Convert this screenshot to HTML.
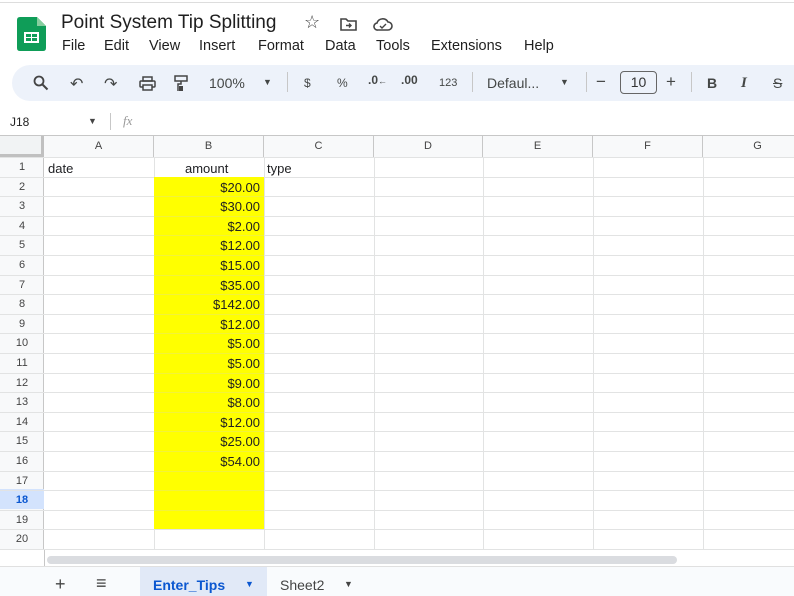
<!DOCTYPE html>
<html><head><style>
*{margin:0;padding:0;box-sizing:border-box}
body{width:794px;height:596px;overflow:hidden;background:#fff;font-family:"Liberation Sans",Arial,sans-serif;position:relative;color:#202124}
.a{position:absolute}
.m{position:absolute;top:38px;font-size:14.5px;color:#1f1f1f}
.tb{position:absolute;top:74px;font-size:14px;color:#444746}
.gl{position:absolute;background:#e2e3e3}
.rh{position:absolute;left:0;width:44px;text-align:center;font-size:11px;color:#444}
.ch{position:absolute;top:136px;height:21px;line-height:21px;text-align:center;font-size:11px;color:#444;border-right:1px solid #c7c7c7}
.amt{position:absolute;left:154px;width:106px;text-align:right;font-size:13px;color:#222;z-index:3}
</style></head><body>
<div class="a" style="left:0;top:2px;width:794px;height:1px;background:#ddd"></div>
<svg class="a" style="left:17px;top:17px" width="30" height="34" viewBox="0 0 30 34"><path d="M3 0H20L29 9V31Q29 34 26 34H3Q0 34 0 31V3Q0 0 3 0Z" fill="#0f9d58"/><path d="M20 0V9H29Z" fill="#87ce9f"/><rect x="7" y="15" width="15" height="11" fill="#fff"/><rect x="9" y="17" width="5" height="3" fill="#0f9d58"/><rect x="15" y="17" width="5" height="3" fill="#0f9d58"/><rect x="9" y="21" width="5" height="3" fill="#0f9d58"/><rect x="15" y="21" width="5" height="3" fill="#0f9d58"/></svg>
<div class="a" style="left:61px;top:12px;font-size:19px;color:#1f1f1f">Point System Tip Splitting</div>
<div class="a" style="left:304px;top:12px;font-size:18px;color:#444">☆</div>
<svg class="a" style="left:340px;top:17px" width="17" height="14"><path d="M1 2H6L8 4H16V13H1Z" fill="none" stroke="#444" stroke-width="1.6"/><path d="M6 8.5H11M9 6.5L11 8.5L9 10.5" stroke="#444" fill="none" stroke-width="1.4"/></svg>
<svg class="a" style="left:373px;top:17px" width="20" height="14"><path d="M5 13H15A4 4 0 0 0 15 5A6 6 0 0 0 4 6A3.5 3.5 0 0 0 5 13Z" fill="none" stroke="#444" stroke-width="1.6"/><path d="M7 9L9 11L13 7" stroke="#444" fill="none" stroke-width="1.4"/></svg>
<div class="m" style="left:62px">File</div><div class="m" style="left:104px">Edit</div><div class="m" style="left:149px">View</div><div class="m" style="left:199px">Insert</div><div class="m" style="left:258px">Format</div><div class="m" style="left:325px">Data</div><div class="m" style="left:376px">Tools</div><div class="m" style="left:431px">Extensions</div><div class="m" style="left:524px">Help</div>
<div class="a" style="left:12px;top:65px;width:800px;height:36px;border-radius:18px;background:#edf2fa"></div>
<svg class="a" style="left:33px;top:75px" width="16" height="16"><circle cx="6" cy="6" r="4.5" fill="none" stroke="#444" stroke-width="1.8"/><path d="M9.5 9.5L14.5 14.5" stroke="#444" stroke-width="2"/></svg>
<div class="tb" style="left:70px;font-size:16px">↶</div>
<div class="tb" style="left:104px;font-size:16px">↷</div>
<svg class="a" style="left:139px;top:76px" width="17" height="15"><rect x="4" y="1" width="9" height="4" fill="none" stroke="#444" stroke-width="1.5"/><rect x="1" y="5" width="15" height="6" rx="1" fill="none" stroke="#444" stroke-width="1.5"/><rect x="4" y="9" width="9" height="5" fill="#edf2fa" stroke="#444" stroke-width="1.5"/></svg>
<svg class="a" style="left:174px;top:75px" width="14" height="17"><rect x="1" y="1" width="12" height="5" fill="none" stroke="#444" stroke-width="1.5"/><path d="M7 6V9H4V16" fill="none" stroke="#444" stroke-width="1.5"/><rect x="5" y="11" width="4" height="5" fill="#444"/></svg>
<div class="tb" style="left:209px;top:75px;font-size:14px">100%</div>
<div class="tb" style="left:263px;top:77px;font-size:9px">▼</div>
<div class="a" style="left:287px;top:72px;width:1px;height:20px;background:#c7c7c7"></div>
<div class="tb" style="left:304px;top:76px;font-size:12px">$</div>
<div class="tb" style="left:337px;top:76px;font-size:12px">%</div>
<div class="tb" style="left:368px;top:73px;font-size:12px;font-weight:bold">.0<span style="font-size:9px">←</span></div>
<div class="tb" style="left:401px;top:73px;font-size:12px;font-weight:bold">.00</div>
<div class="tb" style="left:439px;top:77px;font-size:11px">123</div>
<div class="a" style="left:472px;top:72px;width:1px;height:20px;background:#c7c7c7"></div>
<div class="tb" style="left:487px;top:75px;font-size:14px">Defaul...</div>
<div class="tb" style="left:560px;top:77px;font-size:9px">▼</div>
<div class="a" style="left:586px;top:72px;width:1px;height:20px;background:#c7c7c7"></div>
<div class="tb" style="left:596px;top:72px;font-size:17px">−</div>
<div class="a" style="left:620px;top:71px;width:37px;height:23px;border:1px solid #666;border-radius:4px;font-size:14px;text-align:center;line-height:21px;color:#333">10</div>
<div class="tb" style="left:666px;top:72px;font-size:17px">+</div>
<div class="a" style="left:691px;top:72px;width:1px;height:20px;background:#c7c7c7"></div>
<div class="tb" style="left:707px;top:75px;font-weight:bold">B</div>
<div class="tb" style="left:741px;top:75px;font-style:italic;font-family:'Liberation Serif',serif;font-weight:bold;font-size:15px">I</div>
<div class="tb" style="left:773px;top:75px;text-decoration:line-through">S</div>
<div class="a" style="left:10px;top:115px;font-size:12px;color:#222">J18</div>
<div class="a" style="left:88px;top:116px;font-size:9px;color:#444">▼</div>
<div class="a" style="left:110px;top:113px;width:1px;height:17px;background:#c7c7c7"></div>
<div class="a" style="left:123px;top:113px;font-size:13px;font-style:italic;font-family:'Liberation Serif',serif;color:#999">fx</div>
<div class="a" style="left:0;top:135px;width:794px;height:1px;background:#c7c7c7"></div>
<div class="a" style="left:0;top:136px;width:794px;height:21px;background:#f8f9fa"></div>
<div class="a" style="left:0;top:136px;width:44px;height:21px;background:#f1f3f4;border-right:3px solid #c0c0c0;border-bottom:3px solid #c0c0c0"></div>
<div class="ch" style="left:44px;width:110px">A</div>
<div class="ch" style="left:154px;width:110px">B</div>
<div class="ch" style="left:264px;width:110px">C</div>
<div class="ch" style="left:374px;width:109px">D</div>
<div class="ch" style="left:483px;width:110px">E</div>
<div class="ch" style="left:593px;width:110px">F</div>
<div class="ch" style="left:703px;width:110px">G</div>
<div class="a" style="left:0;top:157px;width:794px;height:1px;background:#c7c7c7"></div>
<div class="a" style="left:0;top:158px;width:44px;height:396px;background:#f8f9fa;border-right:1px solid #c7c7c7"></div>
<div class="a" style="left:0;top:489px;width:44px;height:20px;background:#d3e3fd"></div>
<div id="g"></div>
<div class="a" style="left:154px;top:177px;width:110px;height:352px;background:#ffff00;z-index:2"></div>
<div id="y"></div>
<script>
var h='',q='';
for(var i=0;i<21;i++){var y=Math.round(157+i*19.6);h+='<div class="gl" style="left:0;top:'+y+'px;width:794px;height:1px"></div>';if(i>=2&&i<=18)q+='<div class="a" style="z-index:2;left:154px;top:'+y+'px;width:110px;height:1px;background:#f2f23a"></div>';}
[154,264,374,483,593,703].forEach(function(x){h+='<div class="gl" style="left:'+x+'px;top:157px;width:1px;height:397px"></div>';});
for(var i=1;i<=21;i++){var y=Math.round(157+(i-1)*19.6);h+='<div class="rh" style="top:'+(y+4)+'px;'+(i==18?'font-weight:bold;color:#0b57d0':'')+'">'+(i<21?i:'')+'</div>';}
var v=['20.00','30.00','2.00','12.00','15.00','35.00','142.00','12.00','5.00','5.00','9.00','8.00','12.00','25.00','54.00'];
v.forEach(function(a,k){var y=Math.round(157+(k+1)*19.6);h+='<div class="amt" style="top:'+(y+3)+'px">$'+a+'</div>';});
document.getElementById('g').innerHTML=h;document.getElementById('y').innerHTML=q;
</script>
<div class="a" style="left:48px;top:161px;font-size:13px">date</div>
<div class="a" style="left:185px;top:161px;font-size:13px">amount</div>
<div class="a" style="left:267px;top:161px;font-size:13px">type</div>
<div class="a" style="left:0;top:550px;width:794px;height:16px;background:#fff;z-index:4"></div>
<div class="a" style="left:44px;top:550px;width:1px;height:16px;background:#c7c7c7;z-index:4"></div>
<div class="a" style="left:47px;top:556px;width:630px;height:8px;border-radius:4px;background:#dadce0;z-index:4"></div>
<div class="a" style="left:0;top:566px;width:794px;height:30px;background:#f9fbfd;border-top:1px solid #e0e0e0;z-index:4"></div>
<div class="a" style="left:55px;top:574px;font-size:18px;color:#444;z-index:5">+</div>
<div class="a" style="left:96px;top:573px;font-size:18px;color:#444;z-index:5">≡</div>
<div class="a" style="left:140px;top:567px;width:127px;height:29px;background:#e1e9f7;z-index:5"></div>
<div class="a" style="left:153px;top:577px;font-size:14px;font-weight:bold;color:#0b57d0;z-index:5">Enter_Tips</div>
<div class="a" style="left:245px;top:579px;font-size:9px;color:#0b57d0;z-index:5">▼</div>
<div class="a" style="left:280px;top:577px;font-size:14px;color:#444;z-index:5">Sheet2</div>
<div class="a" style="left:344px;top:579px;font-size:9px;color:#444;z-index:5">▼</div>
</body></html>
